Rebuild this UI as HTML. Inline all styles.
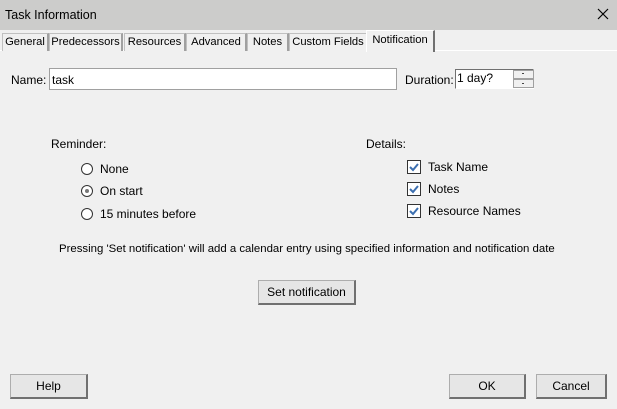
<!DOCTYPE html>
<html><head><style>
body{margin:0;width:617px;height:409px;background:#f0f0f0;font-family:"Liberation Sans",sans-serif;font-size:12px;color:#000;position:relative;overflow:hidden}
.a{position:absolute;white-space:nowrap}
.title{left:0;top:0;width:617px;height:30px;background:#cccccb}
.tab{position:absolute;top:33px;height:17px;border:1px solid #c0c0c0;border-bottom:none;background:#f0f0f0;line-height:17px;text-align:center;border-right:2px solid #a0a0a0;white-space:nowrap;font-size:11.2px;overflow:hidden}
.btn{position:absolute;background:#e6e6e6;border:1px solid #adadad;border-right:2px solid #707070;border-bottom:2px solid #707070;text-align:center;box-sizing:border-box;white-space:nowrap}
.rad{position:absolute;width:10px;height:10px;border:1px solid #333;border-radius:50%;background:#fff}
.chk{position:absolute;width:12px;height:12px;border:1px solid #333;background:#fff}
</style></head><body>
<div class="a title"></div>
<div class="a" style="left:5px;top:8px;font-size:12.5px">Task Information</div>
<svg class="a" style="left:597px;top:8px" width="12" height="12"><path d="M1 1L11 11M11 1L1 11" stroke="#000" stroke-width="1.2"/></svg>
<div class="a" style="left:0;top:50px;width:617px;height:1px;background:#fff"></div>
<div class="tab" style="left:2px;width:44px">General</div>
<div class="tab" style="left:49px;width:71px">Predecessors</div>
<div class="tab" style="left:124px;width:59px">Resources</div>
<div class="tab" style="left:186px;width:58px">Advanced</div>
<div class="tab" style="left:247px;width:39px">Notes</div>
<div class="tab" style="left:289px;width:76px">Custom Fields</div>
<div class="tab" style="left:366px;top:30px;height:21px;width:66px;line-height:19px;border-color:#fff;border-right:2px solid #707070">Notification</div>
<div class="a" style="left:11px;top:73px">Name:</div>
<div class="a" style="left:49px;top:68px;width:346px;height:20px;background:#fff;border:1px solid #a0a0a0"></div>
<div class="a" style="left:52px;top:73px">task</div>
<div class="a" style="left:405px;top:73px">Duration:</div>
<div class="a" style="left:455px;top:69px;width:77px;height:18px;background:#fff;border:1px solid #707070;border-right-color:#fff;border-bottom-color:#fff"></div>
<div class="a" style="left:457px;top:71px">1 day?</div>
<div class="a" style="left:513px;top:70px;width:19px;height:7px;border:1px solid #a0a0a0;background:#f0f0f0"></div>
<div class="a" style="left:513px;top:79px;width:19px;height:7px;border:1px solid #a0a0a0;background:#f0f0f0"></div>
<div class="a" style="left:522px;top:73px;width:2px;height:1px;background:#444"></div>
<div class="a" style="left:522px;top:83px;width:2px;height:1px;background:#444"></div>
<div class="a" style="left:51px;top:137px">Reminder:</div>
<div class="rad" style="left:81px;top:163px"></div><div class="a" style="left:100px;top:162px">None</div>
<div class="rad" style="left:81px;top:185px"></div><div class="a" style="left:85px;top:189px;width:4px;height:4px;border-radius:50%;background:#777"></div><div class="a" style="left:100px;top:184px">On start</div>
<div class="rad" style="left:81px;top:208px"></div><div class="a" style="left:100px;top:207px">15 minutes before</div>
<div class="a" style="left:366px;top:137px">Details:</div>
<div class="chk" style="left:407px;top:160px"></div><svg class="a" style="left:408px;top:161px" width="12" height="12"><path d="M2 6L5 9L10 3" stroke="#3c6fb0" stroke-width="2" fill="none"/></svg><div class="a" style="left:428px;top:160px">Task Name</div>
<div class="chk" style="left:407px;top:182px"></div><svg class="a" style="left:408px;top:183px" width="12" height="12"><path d="M2 6L5 9L10 3" stroke="#3c6fb0" stroke-width="2" fill="none"/></svg><div class="a" style="left:428px;top:182px">Notes</div>
<div class="chk" style="left:407px;top:204px"></div><svg class="a" style="left:408px;top:205px" width="12" height="12"><path d="M2 6L5 9L10 3" stroke="#3c6fb0" stroke-width="2" fill="none"/></svg><div class="a" style="left:428px;top:204px">Resource Names</div>
<div class="a" style="left:59px;top:243px;font-size:11.4px">Pressing 'Set notification' will add a calendar entry using specified information and notification date</div>
<div class="btn" style="left:258px;top:280px;width:98px;height:25px;line-height:22px">Set notification</div>
<div class="btn" style="left:10px;top:374px;width:78px;height:25px;line-height:22px">Help</div>
<div class="btn" style="left:449px;top:374px;width:77px;height:25px;line-height:22px">OK</div>
<div class="btn" style="left:536px;top:374px;width:71px;height:25px;line-height:22px">Cancel</div>
</body></html>
